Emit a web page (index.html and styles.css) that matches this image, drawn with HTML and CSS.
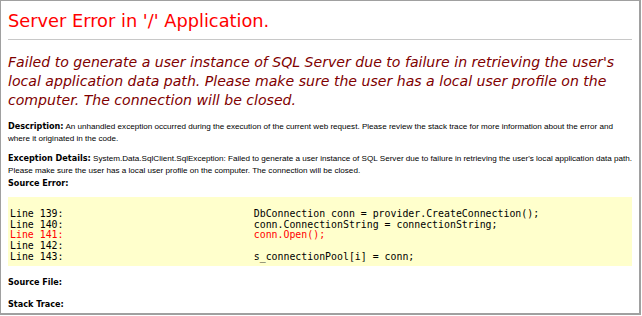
FILE: index.html
```html
<!DOCTYPE html>
<html lang="en">
<head>
  <meta charset="UTF-8">
  <title>Server Error in '/' Application.</title>
  <link rel="stylesheet" href="styles.css">
</head>
<body>
  <div class="frame">
    <h1>Server Error in '/' Application.</h1>
    <hr class="rule">
    <h2>Failed to generate a user instance of SQL Server due to failure in retrieving the user's local application data path. Please make sure the user has a local user profile on the computer. The connection will be closed.</h2>

    <p class="info desc"><b>Description:</b> An unhandled exception occurred during the execution of the current web request. Please review the stack trace for more information about the error and where it originated in the code.</p>

    <p class="info"><b>Exception Details:</b> System.Data.SqlClient.SqlException: Failed to generate a user instance of SQL Server due to failure in retrieving the user's local application data path. Please make sure the user has a local user profile on the computer. The connection will be closed.</p>

    <p class="info label-src"><b>Source Error:</b></p>

    <pre class="source">

Line 139:                                DbConnection conn = provider.CreateConnection();
Line 140:                                conn.ConnectionString = connectionString;
<span class="err">Line 141:                                conn.Open();</span>
Line 142:
Line 143:                                s_connectionPool[i] = conn;</pre>

    <p class="info label-file"><b>Source File:</b></p>
    <p class="info label-trace"><b>Stack Trace:</b></p>
  </div>
</body>
</html>
```

FILE: styles.css
```css
* {
  box-sizing: border-box;
}
body {
  margin: 0;
  background: #fff;
  font-family: 'Liberation Sans', Arial, sans-serif;
}
/* marco gris alrededor de la captura */
.frame {
  width: 641px;
  height: 315px;
  border: 1px solid #a0a0a0;
  border-right-width: 2px;
  border-bottom-width: 2px;
  padding: 0 7px;
  overflow: hidden;
}
h1 {
  margin: 8px 0 0 0;
  font-family: 'DejaVu Sans', Verdana, sans-serif;
  font-weight: normal;
  font-size: 17.8px;
  line-height: 24px;
  color: red;
}
.rule {
  margin: 6px 0 0 0;
  border: 0;
  border-top: 1px solid #c8c8c8;
}
h2 {
  margin: 13px 0 0 0;
  font-family: 'DejaVu Sans', Verdana, sans-serif;
  font-weight: normal;
  font-style: italic;
  font-size: 14.1px;
  line-height: 19px;
  color: maroon;
}
.info {
  margin: 7px 0 0 0;
  font-size: 8.1px;
  line-height: 12px;
  color: #000;
}
.info b {
  font-family: 'DejaVu Sans', Verdana, sans-serif;
  font-size: 8.1px;
}
.desc {
  margin-top: 10px;
}
.label-src {
  margin-top: 0;
}
.label-file {
  margin-top: 10px;
}
.label-trace {
  margin-top: 9px;
}
.source {
  margin: 7px 0 0 0;
  padding: 1px 2px 3px 2px;
  background: #ffffcc;
  font-family: 'DejaVu Sans Mono', 'Lucida Console', monospace;
  font-size: 9.9px;
  line-height: 10.75px;
  color: #000;
}
.source .err {
  color: red;
}
```
